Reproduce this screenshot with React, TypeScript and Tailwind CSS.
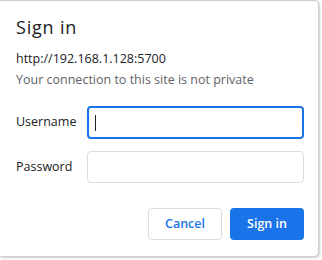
export default function App() {
  return (
    <div className="w-[322px] h-[260px] bg-white" style={{ fontFamily: '"Open Sans", "Noto Sans", sans-serif' }}>
      <div className="w-[319px] h-[257px] bg-white border-t border-r border-b border-[#cfcfcf] rounded-tr-[5px] rounded-br-[5px] shadow-[1px_1px_2px_rgba(0,0,0,0.2)] pl-4 pr-[14px] flex flex-col">
        {/* Header */}
        <h1 className="text-[18px] leading-[24px] tracking-[0.8px] text-[#202124] mt-[14px]">Sign in</h1>
        <p className="text-[12.5px] leading-[19px] text-[#202124] mt-[10px]">http://192.168.1.128:5700</p>
        <p className="text-[12.5px] leading-[19px] text-[#5f6368] mt-[2px]">Your connection to this site is not private</p>

        {/* Fields */}
        <div className="grid grid-cols-[71px_217px] gap-y-[12px] items-center mt-[17px] text-[12.5px] text-[#202124]">
          <label>Username</label>
          <div className="h-[33px] rounded-[4px] border-2 border-[#1a73e8] flex items-center pl-[6px]">
            <div className="w-px h-[16px] bg-[#202124]" />
          </div>
          <label>Password</label>
          <div className="h-[32px] rounded-[4px] border border-[#dadce0]" />
        </div>

        {/* Actions */}
        <div className="flex justify-end gap-2 mt-[25px]">
          <button className="w-[74px] h-[32px] rounded-[4px] border border-[#dadce0] bg-white text-[12.5px] font-semibold text-[#1a73e8]">
            Cancel
          </button>
          <button className="w-[74px] h-[32px] rounded-[4px] bg-[#1a73e8] text-[12.5px] font-semibold text-white">
            Sign in
          </button>
        </div>
      </div>
    </div>
  );
}
